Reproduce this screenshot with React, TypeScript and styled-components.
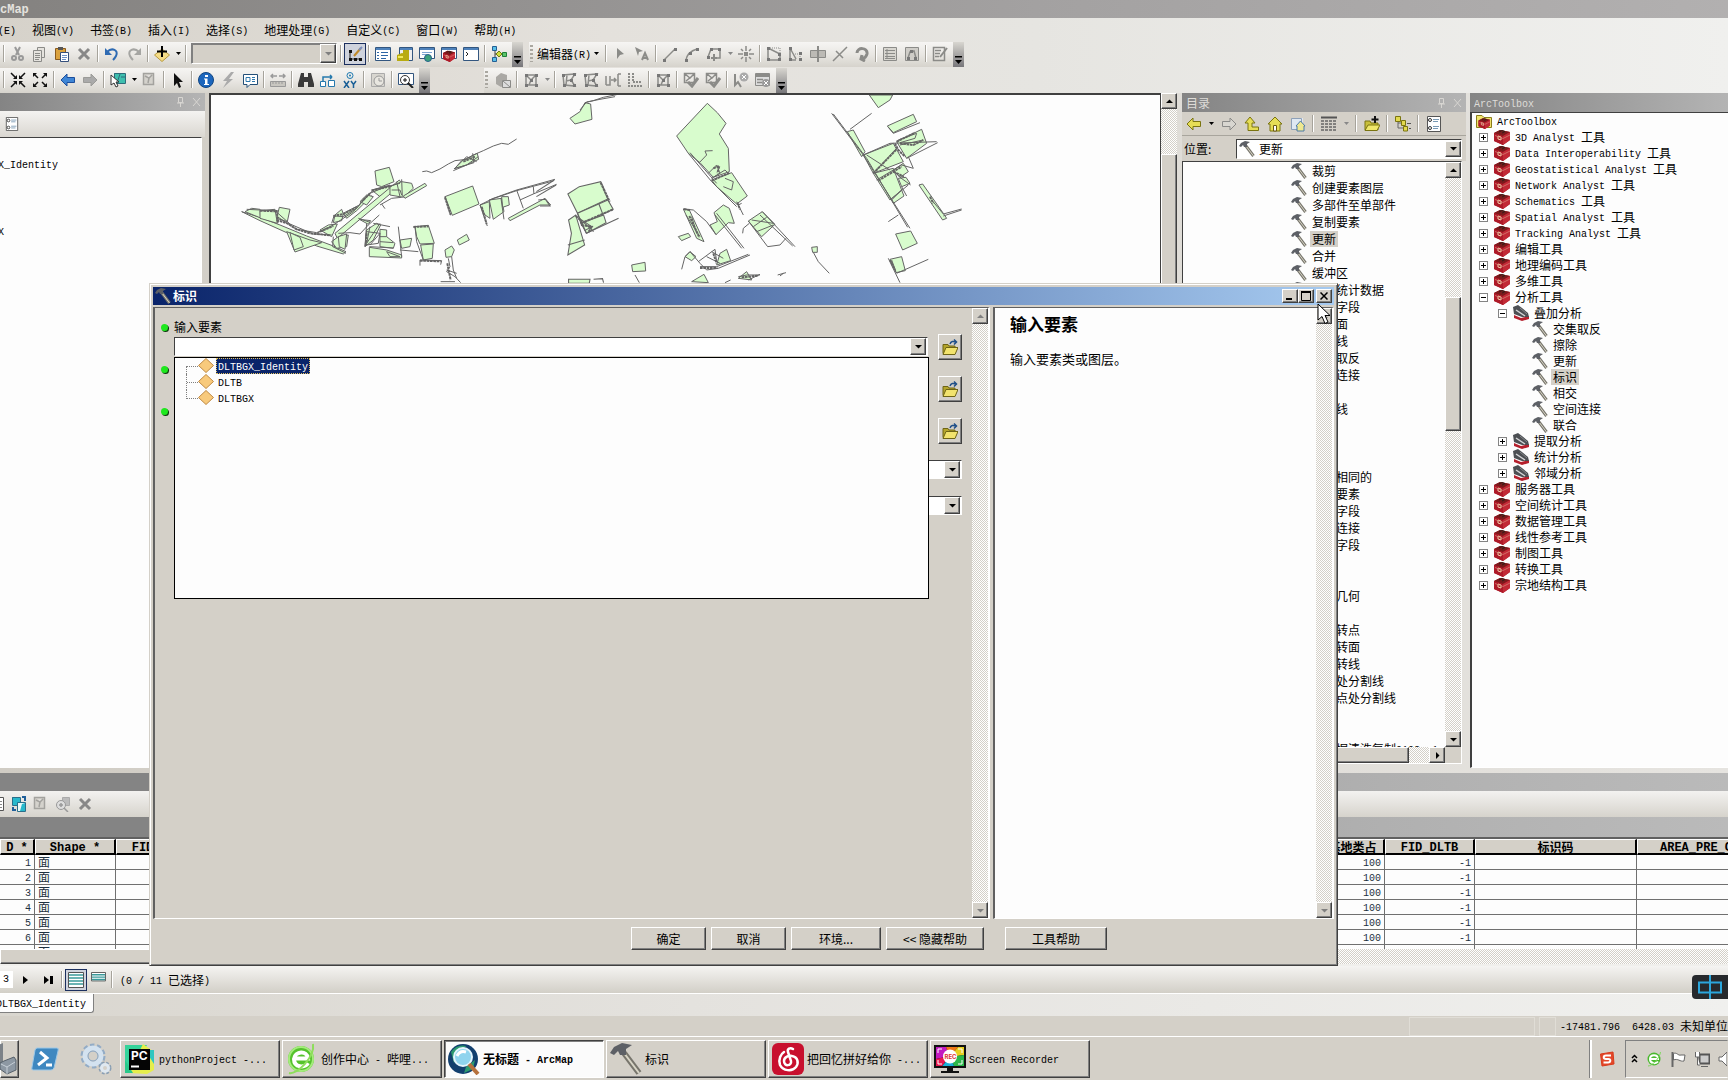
import React from "react";
import styled, { createGlobalStyle, css } from "styled-components";

const CJK = `"Noto Sans CJK SC", sans-serif`;
const MONO = `"Liberation Mono", "Noto Sans CJK SC", monospace`;
const FACE = "#d4d0c8";
const DITHER = `repeating-conic-gradient(#ffffff 0 25%, #d4d0c8 0 50%) 0 0 / 2px 2px`;

const Global = createGlobalStyle`
  * { box-sizing: border-box; }
  html, body { margin: 0; height: 100%; }
  body { background: ${FACE}; color: #000; font: 12px/16px ${CJK}; overflow: hidden; }
  button, input, select { font: inherit; color: inherit; margin: 0; padding: 0; border: 0; background: none; border-radius: 0; outline: 0; }
  svg { display: block; flex: none; }
  ul, h1, h2, p { margin: 0; padding: 0; list-style: none; font: inherit; }
`;

const raised = css`
  background: ${FACE};
  border: 1px solid;
  border-color: #fff #404040 #404040 #fff;
  box-shadow: inset -1px -1px 0 #808080;
`;
const sunken = css`
  border: 1px solid;
  border-color: #404040 #fff #fff #404040;
`;

/* ---------- text: half-width latin beside full-width han ---------- */
const Latin = styled.span<{ $big?: boolean }>`
  font-family: ${MONO};
  font-size: ${(p) => (p.$big ? 12 : 10)}px;
  line-height: 10px;
  vertical-align: 1px;
`;
const Run = styled.span`
  white-space: pre;
`;
function T({ children, big }: { children: string; big?: boolean }) {
  return (
    <Run>
      {children
        .split(/([\x20-\x7e]+)/)
        .filter(Boolean)
        .map((s, i) => (/^[\x20-\x7e]/.test(s) ? <Latin key={i} $big={big}>{s}</Latin> : s))}
    </Run>
  );
}

/* ---------- icons ---------- */
const G = "#8b8b88";
const L = (d: string, c = G, w = c === G ? 1.5 : 1, fill = "none") => <path d={d} stroke={c} strokeWidth={w} fill={fill} />;
const F = (d: string, c = G) => <path d={d} fill={c} />;
const toolbox = (
  <>
    {F("M0 4 6 1 16 3 16 11 9 16 0 12Z", "#a51322")}
    {F("M0 4 6 1 16 3 9 7Z", "#7c1a1c")}
    {F("M9 7 16 3 16 11 9 16Z", "#c22a36")}
    {F("M0 4 9 7 9 16 0 12Z", "#ae1a28")}
    {L("M5 3 8 1.500 11 2.500 8 4", "#302018", 1)}
    {L("M4 7 4 10 7 11 7 8Z", "#f0cfa8", 1)}
    {L("M1 6.500 9 9.500 16 6", "#d98a7c", 0.7)}
  </>
);
const nodes = (pts: number[][], c = "#777") => pts.map(([x, y], i) => <rect key={i} x={x - 1} y={y - 1} width="3" height="3" fill={c} />);

const ICONS: Record<string, React.ReactNode> = {
  cut: <>{L("M5 1 9 9M10 1 6 9", "#999", 2)}<circle cx="4" cy="12" r="2" stroke="#999" fill="none" strokeWidth="2" /><circle cx="11" cy="12" r="2" stroke="#999" fill="none" strokeWidth="2" /></>,
  copy: <>{L("M5.500 1.500H12.500V11.500H5.500Z", G, 1, "#e5e3de")}{L("M1.500 4.500H9.500V15.500H1.500Z", G, 1, "#e5e3de")}{L("M3 7.500H8M3 9.500H8M3 11.500H8M3 13.500H7", G, 1)}</>,
  paste: <>{L("M1.500 2.500H11.500V13.500H1.500Z", "#8a5a1e", 1, "#dba23e")}{F("M4 1H9V4H4Z", "#555")}{L("M6.500 6.500H14.500V15.500H6.500Z", "#35507c", 1, "#fff")}{L("M8 9.500H13M8 11.500H13M8 13.500H12", "#6b8fc4")}</>,
  x: L("M3 3 13 13M13 3 3 13", "#888", 3),
  undo: <>{L("M3 6C8 1 15 4 12 10 11 12 10 13 9 14", "#2f6bb3", 2)}{F("M1 2V9H8Z", "#2f6bb3")}</>,
  redo: <>{L("M13 6C8 1 1 4 4 10 5 12 6 13 7 14", "#a5a5a2", 2)}{F("M15 2V9H8Z", "#a5a5a2")}</>,
  add: <>{L("M0.500 9 8 3 15.500 9 8 15.500Z", "#b89a3c", 1, "#f5dc86")}{L("M8 0V11M3 5.500H13", "#000", 2)}</>,
  editor: <>{L("M3 5V13H13", "#222", 1)}{nodes([[3, 5], [3, 13], [8, 13], [13, 13]], "#111")}{L("M7 10 14 2", "#c08a2a", 2)}{L("M12 4 15 1", "#7a8fc0", 2)}</>,
  toc: <>{L("M0.500 1.500H15.500V14.500H0.500Z", "#33567f", 1, "#fff")}{F("M1 2H15V4H1Z", "#4f82bb")}{L("M2 6.500H4M6 6.500H13M2 9.500H4M6 9.500H13M2 12.500H4M6 12.500H11", "#2e66a6", 1)}</>,
  catalog: <>{L("M2.500 1.500H15.500V14.500H2.500Z", "#33567f", 1, "#eee")}{F("M3 2H15V4H3Z", "#4f82bb")}{F("M0 9 5 7 12 9V15H0ZM6 4H12V9H6Z", "#b8ab10")}{F("M1 10H6V12H1Z", "#f2e95a")}</>,
  search: <>{L("M0.500 1.500H15.500V12.500H0.500Z", "#33567f", 1, "#fff")}{F("M1 2H15V4H1Z", "#4f82bb")}{L("M3 6.500H13M3 8.500H8", "#7fa6d4")}<circle cx="9" cy="12" r="3.500" fill="#3da27c" stroke="#27618c" /></>,
  toolwin: <>{L("M0.500 1.500H15.500V12.500H0.500Z", "#33567f", 1, "#fff")}{F("M1 2H15V4H1Z", "#4f82bb")}<g transform="translate(2 4) scale(.75)">{toolbox}</g></>,
  python: <>{L("M0.500 1.500H15.500V14.500H0.500Z", "#33567f", 1, "#fff")}{F("M1 2H15V4H1Z", "#4f82bb")}{L("M3 6 5 8 3 10", "#222")}</>,
  model: <>{L("M4 3V13M4 8H10", "#444", 1)}{L("M1.500 0.500H5.500V4.500H1.500ZM1.500 11.500H5.500V15.500H1.500Z", "#245f95", 1, "#5ac0e8")}{L("M5 8 8 5 11 8 8 11Z", "#6d7d16", 1, "#cfdd3e")}{L("M11.500 6.500H15.500V10.500H11.500Z", "#1f7f38", 1, "#5cc46c")}</>,
  inward: <>{L("M1 1 6 6M15 1 10 6M1 15 6 10M15 15 10 10", "#111", 1.500)}{F("M7 3V7H3ZM9 3V7H13ZM7 13V9H3ZM9 13V9H13Z", "#111")}</>,
  outward: <>{L("M2 2 6 6M14 2 10 6M2 14 6 10M14 14 10 10", "#111", 1.500)}{F("M1 1H5L1 5ZM15 1H11L15 5ZM1 15H5L1 11ZM15 15H11L15 11Z", "#111")}</>,
  back: L("M1 8 7 2V5.500H14.500V10.500H7V14Z", "#1c4e9c", 1, "#3f86d6"),
  fwd: L("M15 8 9 2V5.500H1.500V10.500H9V14Z", "#9b9b98", 1, "#aaa"),
  select: <>{F("M4 1H15V11H4Z", "#3ebfae")}{L("M4.500 1.500H15.500V11.500H4.500ZM10 2 7 11M11 5H15", "#2d6c7a")}{L("M1 3 1 13 4 11 6 15 8 14 6 10 9 10Z", "#333", 1, "#fff")}</>,
  clear: L("M1.500 1.500H11.500V12.500H1.500ZM3 4 7 6 10 3M7 6 6 11", "#a3a29e", 1.500, "#d4d2cc"),
  pointer: F("M4 1V14L7 11 9 16 11 15 9 10 13 10Z", "#111"),
  info: <><circle cx="8" cy="8" r="7.500" fill="#1c66bd" stroke="#114682" />{F("M7 3H10V5H7ZM6 6.500H9.500V12H11V13H6V12H7V7.500H6Z", "#fff")}</>,
  bolt: F("M11 0 3 9H7L3 16 13 7H9L14 0Z", "#aaa"),
  popup: <>{L("M1.500 2.500H15.500V12.500H8L5 15.500V12.500H1.500Z", "#234f78", 1, "#fff")}{L("M4 5.500H8V9.500H4ZM10 5.500H13M10 7.500H13M10 9.500H13", "#2f78ad")}</>,
  measure: <>{L("M0.500 9.500H15.500V14.500H0.500ZM3 9V12M6 9V12M9 9V12M12 9V12", "#999", 1, "#c8c6c0")}{L("M1 4H7M9 4H15M3 2 1 4 3 6M13 2 15 4 13 6", "#999", 1.500)}</>,
  find: F("M3 1H6V5H10V1H13L16 12V15H10V10H6V15H0V12Z", "#3a3a3a"),
  route: <>{L("M3 13V5H12M12 5 10 3M12 5 10 7", "#2679ad", 1.500)}{L("M0.500 9.500H5.500V14.500H0.500ZM8.500 8.500H14.500V14.500H8.500Z", "#2679ad", 1, "#fff")}</>,
  xy: <><circle cx="8" cy="3.500" r="3" fill="none" stroke="#1e79b0" /><circle cx="8" cy="3.500" r="1" fill="#1e79b0" />{L("M2 9 7 16M7 9 2 16M9 9 11.500 12.500 14 9M11.500 12V16", "#1a5f96", 1.500)}</>,
  clock: <>{L("M1.500 1.500H14.500V14.500H1.500Z", "#aaa", 1, "#d8d6d0")}<circle cx="9" cy="9" r="5" fill="#e8e6e0" stroke="#999" />{L("M9 6V9H12", "#999")}</>,
  magnify: <>{L("M0.500 1.500H15.500V12.500H0.500Z", "#33567f", 1, "#fff")}<circle cx="7" cy="8" r="4.500" fill="#fff" stroke="#333" />{L("M5 8H9M7 6V10", "#111")}{L("M10 11 15 16", "#222", 2)}</>,
  arrowA: <>{F("M1 1 9 5 5 6 4 10Z")}{L("M8 14 11 7 14 14M9 12H13", G, 2)}</>,
  arrowS: F("M5 2 12 8 8 9 5 13Z"),
  line: <>{L("M2 14 13 3")}{nodes([[2, 14], [13, 3]])}</>,
  arc: <>{L("M2 14C3 8 6 5 13 3")}{nodes([[2, 14], [6, 7], [13, 3]])}</>,
  trace: <>{L("M2 11 5 3H14V12H9")}{nodes([[5, 3], [13, 3], [2, 11]])}{L("M8 8V15M5 12H11", G, 2)}</>,
  star: <>{L("M8 0V5M8 11V16M0 8H5M11 8H16M3 3 5 5M13 3 11 5M3 13 5 11M13 13 11 11", G, 1.500)}{F("M6 6H10V10H6Z")}</>,
  reshape: <>{L("M2 2V14H14V8L2 2")}<path d="M2 2H14V8" stroke={G} strokeDasharray="1 1" fill="none" />{nodes([[2, 2], [2, 13], [13, 13], [13, 8]])}</>,
  splitp: <>{L("M2 2V14H8M2 2 8 13")}<path d="M12 6V15M7 8H14" stroke={G} strokeDasharray="1 1" fill="none" />{nodes([[2, 2], [2, 13], [12, 7], [12, 13]])}</>,
  cutp: <>{L("M0.500 4.500H15.500V11.500H0.500Z", G, 1, "#bcbab5")}{L("M8 0V16", G, 2)}</>,
  split: L("M1 15 15 1M4 5 11 12"),
  rotate: L("M3 7C3 1 14 1 13 8 12 12 8 13 8 13M8 9 7 13 11 15", G, 3),
  attrs: <>{L("M1.500 1.500H14.500V14.500H1.500Z", G, 1, "#d8d6d0")}{L("M3 4.500H13M3 7.500H13M3 10.500H13M3 12.500H13M5 3V13", G, 1)}</>,
  sketch: <>{L("M1.500 1.500H14.500V14.500H1.500Z", G, 1, "#cfcdc8")}{L("M4 12 6 6 10 5 12 12")}{nodes([[4, 12], [7, 5], [11, 12]])}</>,
  form: <>{L("M1.500 1.500H12.500V14.500H1.500ZM3 4.500H9M3 7.500H8M3 10.500H7", G, 1.500)}{L("M8 11 15 2", G, 2)}</>,
  cube: <>{F("M1 5 6 1 12 3 12 12 6 15 1 12Z", "#aaa8a4")}{L("M7.500 8.500H15.500V15.500H7.500ZM8 9 15 15", G, 1, "#ddd")}</>,
  topo: <>{L("M3 3H13V13H3ZM3 3 8 8 13 3M8 8 6 13")}{nodes([[3, 3], [13, 3], [3, 13], [8, 8], [13, 13]])}</>,
  topo2: <>{L("M2 3 14 2 10 8 14 14 3 13ZM6 3 5 13M10 8 5 9")}{nodes([[2, 3], [13, 2], [10, 8], [3, 13], [13, 13]])}</>,
  align: L("M1 4V13M1 13H5V4M13 2V14M13 2H16M13 14H16M6 8H11M9 6 11 8 9 10"),
  corner: <path d="M2 1V14H15M6 1V10H14" stroke={G} strokeWidth="2" strokeDasharray="2 1" fill="none" />,
  check: <>{L("M1.500 1.500H11.500V10.500H1.500ZM2 2 7 6 11 2M3 9 8 5")}{L("M5 10 9 14 15 6", G, 3)}</>,
  inspect: <>{L("M2 2V13L5 10 8 15", G, 2)}<circle cx="11" cy="5" r="4.500" fill="#aaa" />{L("M9 3 13 7M13 3 9 7", "#fff")}</>,
  errs: <>{L("M0.500 1.500H14.500V13.500H0.500Z", G, 1, "#ddd")}{F("M1 2H14V5H1Z")}{L("M2 7.500H8M2 10.500H7")}<circle cx="11" cy="11" r="4" fill="#999" />{L("M9 9 13 13M13 9 9 13", "#fff")}</>,
  list: <>{L("M1.500 0.500H14.500V15.500H1.500Z", "#555", 1, "#fff")}{L("M7 3.500H13M7 5.500H12M7 10.500H13M7 12.500H12", "#7a9ab5")}<circle cx="4" cy="4" r="1.500" fill="none" stroke="#333" /><circle cx="4" cy="12" r="1.500" fill="none" stroke="#333" /></>,
  yback: L("M1 8 7 2V5.500H14.500V10.500H7V14Z", "#7a7410", 1, "#e6dd55"),
  gfwd: L("M15 8 9 2V5.500H1.500V10.500H9V14Z", "#8a8a88", 1, "#d8d6d0"),
  up: L("M6 1 1 7H4V14.500H14.500V11H8V7H11Z", "#7a7410", 1, "#e6dd55"),
  home: <>{L("M1 8 8 1 15 8H13V15H3V8Z", "#7a7410", 1, "#e6dd55")}{L("M6.500 9.500H9.500V15H6.500Z", "#6b5a10", 1, "#fff")}</>,
  homedb: <>{F("M2 2H13V13H2Z", "#dfe8f2")}{L("M1.500 2.500H11.500V13.500H1.500Z", "#8da0b8")}{L("M6 10 10.500 5 15 10H14V15H7V10Z", "#4b7aa8", 1, "#efe890")}</>,
  grid: <>{L("M0 1.500H16", "#555", 2)}<path d="M0 5H16M0 8H16M0 11H16M0 14H16" stroke="#666" strokeWidth="1.500" strokeDasharray="3 1" /></>,
  folderplus: <>{L("M1 14V5H6L7 7H14V14Z", "#7a7410", 1, "#c8bf3a")}{L("M1 14.500 4 9H16L13 14.500Z", "#7a7410", 1, "#efe76a")}{L("M11 0V7M7.500 3.500H14.500", "#111", 2)}</>,
  tree: <>{L("M3 3V12H10M3 7H9", "#666")}{L("M0.500 0.500H5.500V5.500H0.500ZM6.500 4.500H10.500V9.500H6.500ZM8.500 10.500H12.500V15H8.500Z", "#7a7410", 1, "#e2d94e")}{L("M12 7.500H16M14 12.500H16", "#555")}</>,
  hammer: <>{L("M7 5 14.500 15", "#77756c", 3)}{L("M7 5 14.500 15", "#d8d5c6", 1)}{F("M0 5 2 2 6 0 11 1 8 3 8 6 5 6 4 4 2 6Z", "#5d6066")}</>,
  toolbox,
  boxroot: <>{L("M0.500 2.500H6L8 4.500H15.500V14.500H0.500Z", "#8a7d1a", 1, "#f0e46c")}<g transform="translate(2.500 4.500) scale(.72)">{toolbox}</g></>,
  toolset: <>{F("M1 10 8 13 16 11V14L9 16 1 13Z", "#b5202d")}{F("M0 2 5 0 9 3 15 8 16 12 9 12 1 9Z", "#4c4f53")}{L("M3 5 12 11", "#d4d5d7", 1.500)}{L("M7 3 14 9", "#85878a", 1)}</>,
  diamond: L("M8 0.500 15.500 7.500 8 14.500 0.500 7.500Z", "#c08a45", 1, "#f8ca7c"),
  folder: <>{L("M1 14.500V5.500H6L7 7H13V9", "#6e6415", 1, "#b4a52b")}{L("M1 15.500 4 8.500H16L13 15.500Z", "#6e6415", 1, "#f2e36d")}{L("M8 5C9 2 11 2 14 3M12 0.500 14.500 3 12 5.500", "#1f4f88", 1.500)}</>,
  switchsel: <>{F("M1 1H9V9H1Z", "#28b8cc")}{L("M1.500 1.500H9.500V9.500H1.500ZM6.500 6.500H14.500V15.500H6.500Z", "#2a6f8a", 1, "none")}{F("M7 7H14V15H7Z", "#eafafa")}{F("M11 8 14 7V15L9 15Z", "#28b8cc")}{L("M11 1H14V5M2 11V14H5", "#1f5f9a", 2)}</>,
  zoomsel: <>{L("M7.500 1.500H14.500V9.500H7.500Z", "#aaa", 1, "#bbb")}<circle cx="6" cy="9" r="4.500" fill="#ddd" stroke="#999" />{L("M4 9H8M6 7V11M9 12 13 16", "#999", 1.500)}</>,
  tableic: <>{L("M0.500 1.500H14.500V14.500H0.500Z", "#555", 1, "#fff")}{L("M2 5.500H13M2 8.500H13M2 11.500H13M5 3V13", "#888")}</>,
  allrec: <>{L("M0.500 0.500H15.500V15.500H0.500Z", "#555", 1, "#fff")}{L("M1 3H15M1 6H15M1 9H15M1 12H15", "#3a9a9a", 1.500)}</>,
  selrec: <>{L("M0.500 0.500H15.500V9.500H0.500Z", "#555", 1, "#fff")}{L("M1 3H15M1 5.500H15M1 8H15", "#3a9a9a", 1.500)}</>,
  sogou: <>{L("M1.500 3 14 1 15 13 3 15Z", "#d93a1c", 1, "#e3482a")}{L("M12 4.500H7C4 4.500 4 8 7 8H9.500C12 8 12 11.500 9 11.500H4.500", "#fff", 2)}</>,
  egreen: <><circle cx="8" cy="8" r="6.500" fill="#4ab82e" />{L("M4 8H12C12 3 4 3 4 8 4 13 10 13 12 10.500", "#fff", 2)}{L("M2 15C6 15 14 7 14.500 1", "#7ed860")}</>,
  flag: <>{L("M2.500 1V16", "#666", 2)}{L("M3.500 2.500C7 1 8 5 11 4L15 4 14 10C10 11 8 7 3.500 9Z", "#666", 1, "#fff")}</>,
  net: <>{L("M5.500 3.500H15.500V12.500H5.500Z", "#555", 2, "#ccc")}{L("M7 15.500H14M1.500 1V6H5.500V1M3.500 6V14H6", "#666", 1, "#fff")}</>,
  sound: L("M1 6H4L9 1V15L4 10H1Z", "#666", 1, "#fff"),
};
function Icon({ n, s = 16 }: { n: string; s?: number }) {
  return (
    <svg width={s} height={s} viewBox="0 0 16 16" aria-hidden="true">
      {ICONS[n]}
    </svg>
  );
}
const Tri = ({ c = "#000", dir = "down" }: { c?: string; dir?: "up" | "down" | "right" }) => (
  <svg width="7" height="7" viewBox="0 0 7 7" aria-hidden="true">
    <path d={dir === "up" ? "M0 5H7L3.500 1.500Z" : dir === "down" ? "M0 2H7L3.500 5.500Z" : "M2 0V7L5.500 3.500Z"} fill={c} />
  </svg>
);

/* ---------- frame ---------- */
const Screen = styled.div`
  position: relative;
  display: flex;
  flex-direction: column;
  height: 100vh;
  overflow: hidden;
  background: ${FACE};
`;
const AppTitle = styled.h1`
  flex: none;
  height: 18px;
  overflow: hidden;
  background: linear-gradient(90deg, #848280, #a3a1a1 60%, #b2b0b0);
  color: #e4e2de;
  font: bold 12px/20px ${MONO};
`;
const Chrome = styled.div`
  flex: none;
  background: linear-gradient(90deg, #d6d2ca, #e4e1dc 35%, #e6e5e1 60%, #f0f0ee);
`;
const Menu = styled.nav`
  display: flex;
  gap: 16px;
  height: 24px;
  margin-left: -2px;
  align-items: center;
`;
const MenuItem = styled.button`
  height: 20px;
  white-space: nowrap;
`;
const Bars = styled.div<{ $gap: number }>`
  display: flex;
  gap: ${(p) => p.$gap}px;
  height: 25px;
  & + & { margin-top: 1px; }
`;
const Bar = styled.div<{ $lead?: boolean }>`
  display: flex;
  align-items: center;
  height: 25px;
  padding: 0 0 2px ${(p) => (p.$lead ? 1 : 0)}px;
  background: linear-gradient(#f6f5f3, #e9e7e3 50%, #d6d3cc);
`;
const Tool = styled.button<{ $on?: boolean; $w?: number }>`
  display: flex;
  align-items: center;
  justify-content: center;
  width: ${(p) => p.$w ?? 22}px;
  height: 22px;
  flex: none;
  ${(p) => p.$on && css`border: 1px solid #1b2f5e; background: #cfd3dd;`}
`;
const Sep = styled.span`
  width: 2px;
  height: 17px;
  margin: 0 2px;
  flex: none;
  border-left: 1px solid #a6a39b;
  border-right: 1px solid #fff;
`;
const Caret = styled.button`
  width: 10px;
  height: 22px;
  display: flex;
  align-items: center;
  justify-content: center;
  flex: none;
`;
const Overflow = styled.button`
  display: flex;
  align-items: flex-end;
  justify-content: center;
  width: 11px;
  height: 25px;
  margin: 0 0 -2px 2px;
  padding-bottom: 3px;
  background: linear-gradient(#d8d6d0, #77767a);
`;
const Grip = styled.span`
  width: 3px;
  height: 17px;
  margin: 0 4px 0 1px;
  background: repeating-linear-gradient(#aaa7a0 0 2px, transparent 2px 4px);
`;
const BarSelect = styled.div`
  display: flex;
  width: 146px;
  height: 21px;
  margin: 0 1px 0 2px;
  border: 1px solid;
  border-color: #808080 #fff #fff #808080;
  box-shadow: inset 1px 1px 0 #808080;
  background: ${FACE};
  select { flex: 1; appearance: none; }
`;
const Arrow = styled.span<{ $w?: number }>`
  ${raised}
  display: flex;
  align-items: center;
  justify-content: center;
  width: ${(p) => p.$w ?? 16}px;
  min-height: 16px;
  flex: none;
`;
const EditorBtn = styled.button`
  display: flex;
  align-items: center;
  gap: 3px;
  height: 22px;
  padding: 0 4px 0 0;
  white-space: nowrap;
`;

function Tools({ spec }: { spec: string }) {
  return (
    <>
      {spec.split(" ").map((s, i) => {
        if (s === "|") return <Sep key={i} />;
        if (s === "v" || s === "V")
          return <Caret key={i} aria-label="more"><svg width="5" height="3" aria-hidden="true"><path d="M0 0H5L2.500 3Z" fill={s === "V" ? "#000" : "#888"} /></svg></Caret>;
        if (s === ">")
          return <Overflow key={i} aria-label="options"><svg width="7" height="8" aria-hidden="true"><path d="M0 0H7V1.500H0ZM0 4H7L3.500 8Z" fill="#000" /></svg></Overflow>;
        return <Tool key={i} $on={s === "editor"} aria-label={s}><Icon n={s} /></Tool>;
      })}
    </>
  );
}

/* ---------- workspace ---------- */
const Work = styled.main`
  flex: 1;
  min-height: 0;
  display: flex;
  padding-bottom: 5px;
  background: linear-gradient(90deg, #d0ccc4, #dcd9d3 50%, #e6e4e0);
`;
const Panel = styled.section<{ $w: number; $gap?: number }>`
  display: flex;
  flex-direction: column;
  width: ${(p) => p.$w}px;
  flex: none;
  margin-left: ${(p) => p.$gap ?? 0}px;
  min-height: 0;
`;
const PanelHead = styled.header<{ $h?: number }>`
  display: flex;
  align-items: center;
  gap: 7px;
  height: ${(p) => p.$h ?? 19}px;
  flex: none;
  padding: 0 4px;
  background: linear-gradient(90deg, #848484, #b4b4b4);
  color: #dedcd8;
  h2 { flex: 1; }
`;
const PanelBtn = styled.button`
  width: 9px;
  height: 12px;
`;
const PanelBar = styled.div`
  display: flex;
  align-items: center;
  height: 26px;
  flex: none;
  padding-left: 1px;
  background: linear-gradient(#f4f3f1, #dad7d1);
`;
const Contents = styled.div`
  flex: 1;
  background: #fdfdfd;
  margin-right: 3px;
  border-top: 1px solid #404040;
  border-right: 1px solid #fff;
  padding-top: 18px;
  overflow: hidden;
`;
const Layer = styled.div`
  height: 16px;
  margin: 0 0 51px -2px;
`;
const MapView = styled.div`
  flex: 1;
  min-width: 0;
  margin-left: 4px;
  border: 1px solid #404040;
  border-width: 2px 1px 1px 2px;
  background: #fdfdfd;
  overflow: hidden;
`;
const VScroll = styled.div`
  display: flex;
  flex-direction: column;
  width: 16px;
  flex: none;
  background: ${DITHER};
`;
const Thumb = styled.div<{ $w?: number; $h?: number }>`
  ${raised}
  width: ${(p) => (p.$w ? p.$w + "px" : "auto")};
  height: ${(p) => (p.$h ? p.$h + "px" : "auto")};
`;
const ScrollBtn = styled.button`
  ${raised}
  width: 16px;
  height: 16px;
  flex: none;
  display: flex;
  align-items: center;
  justify-content: center;
`;
const Space = styled.div<{ $n?: number }>`
  flex: ${(p) => (p.$n ? `0 0 ${p.$n}px` : 1)};
`;

const CatBar = styled.div`
  display: flex;
  align-items: center;
  height: 24px;
  flex: none;
  background: ${FACE};
  border-bottom: 1px solid #a8a59d;
  ${Tool} { width: 23px; }
  ${Caret} { width: 12px; }
  ${Sep} { margin: 0 3px; }
`;
const Location = styled.div`
  display: flex;
  align-items: center;
  height: 25px;
  flex: none;
  padding: 0 4px 0 2px;
  background: ${FACE};
  label { width: 52px; }
`;
const LocBox = styled.div`
  ${sunken}
  display: flex;
  align-items: center;
  flex: 1;
  height: 20px;
  padding-left: 2px;
  background: #fff;
  input { flex: 1; min-width: 0; padding-left: 4px; height: 16px; }
`;
const CatBody = styled.div`
  flex: 1;
  min-height: 0;
  display: grid;
  grid-template: minmax(0, 1fr) 16px / minmax(0, 1fr) 16px;
  margin: 0 4px 4px 0;
  border: 1px solid;
  border-color: #404040 #fff #fff #404040;
  background: ${FACE};
`;
const CatList = styled.ul`
  background: #fdfdfd;
  overflow: hidden;
  padding-left: 108px;
`;
const CatRow = styled.li`
  height: 17px;
  display: flex;
  align-items: center;
  gap: 3px;
`;
const Label = styled.button<{ $sel?: boolean }>`
  height: 16px;
  line-height: 16px;
  padding: 0 2px;
  white-space: nowrap;
  background: ${(p) => (p.$sel ? "#d4d0c8" : "none")};
`;
const HScroll = styled.div`
  display: flex;
  background: ${DITHER};
`;

const Tree = styled.ul`
  flex: 1;
  background: #fdfdfd;
  border-left: 2px solid #404040;
  border-top: 1px solid #404040;
  border-bottom: 1px solid #fff;
  overflow: hidden;
`;
const TreeRow = styled.li<{ $lv: number }>`
  display: flex;
  align-items: center;
  height: 16px;
  gap: 3px;
  padding-left: ${(p) => (p.$lv ? 7 + 19 * (p.$lv - 1) : 4)}px;
`;
const Expander = styled.button<{ $off?: boolean }>`
  width: 9px;
  height: 9px;
  margin-right: 3px;
  flex: none;
  visibility: ${(p) => (p.$off ? "hidden" : "visible")};
  border: 1px solid #848484;
  background: #fff;
  svg { margin: 1px; }
`;

/* ---------- attribute table ---------- */
const Dock = styled.section`
  flex: none;
`;
const Band = styled.div<{ $h: number; $line?: boolean }>`
  height: ${(p) => p.$h}px;
  background: linear-gradient(90deg, #848484 10%, #b0b0b0 80%, #bababa);
  border-bottom: ${(p) => (p.$line ? "2px solid #606060" : "0")};
`;
const DockBar = styled.div`
  display: flex;
  align-items: center;
  height: 26px;
  background: linear-gradient(#f3f2f0, #d6d3cc);
  overflow: hidden;
  button:first-child { margin-left: -14px; }
`;
const GridBox = styled.div`
  height: 110px;
  overflow: hidden;
  background: #fdfdfd;
`;
const Table = styled.table`
  width: calc(100% + 28px);
  table-layout: fixed;
  border-collapse: separate;
  border-spacing: 0;
  th {
    height: 16px;
    padding: 0;
    font-weight: bold;
    line-height: 13px;
    vertical-align: middle;
    background: ${FACE};
    border: 1px solid;
    border-color: #fff #000 #000 #fff;
    border-width: 1px 2px 2px 1px;
    white-space: nowrap;
    overflow: hidden;
  }
  td {
    height: 15px;
    padding: 0 3px;
    line-height: 14px;
    vertical-align: middle;
    border-right: 1px solid #707070;
    border-bottom: 1px solid #707070;
    text-align: right;
    color: #1c3040;
    white-space: nowrap;
    overflow: hidden;
  }
  td:nth-child(2) { text-align: left; }
`;
const DockScroll = styled.div`
  display: flex;
  height: 17px;
  border-bottom: 2px solid #f0efec;
  background: ${DITHER};
`;
const Nav = styled.div`
  display: flex;
  align-items: center;
  height: 28px;
  background: linear-gradient(#f5f4f2, #d2cfc7);
  border-bottom: 1px solid #fff;
  input { width: 13px; height: 17px; background: #fff; padding-left: 3px; font: 10px/16px ${MONO}; }
`;
const Count = styled.span`
  margin-left: 5px;
`;
const Tabs = styled.div`
  height: 22px;
  background: linear-gradient(90deg, #d9d6cf, #e4e2de 40%, #f0f0ee);
`;
const Tab = styled.button`
  height: 19px;
  margin-left: -6px;
  padding: 0 7px 0 1px;
  background: #fdfdfd;
  border: 1px solid #808080;
  border-top: 0;
  border-radius: 0 0 3px 0;
`;
const Status = styled.footer`
  display: flex;
  justify-content: flex-end;
  align-items: center;
  gap: 4px;
  height: 21px;
  background: ${FACE};
  border-bottom: 1px solid #fff;
  overflow: hidden;
`;
const StatusCell = styled.span<{ $w: number }>`
  width: ${(p) => p.$w}px;
  height: 19px;
  flex: none;
  border: 1px solid #e0ddd6;
`;
const Coords = styled.span`
  width: 168px;
  overflow: hidden;
  white-space: nowrap;
`;

/* ---------- task bar ---------- */
const TaskBar = styled.div`
  display: flex;
  align-items: center;
  height: 43px;
  flex: none;
  background: ${FACE};
`;
const Quick = styled.button<{ $w: number }>`
  width: ${(p) => p.$w}px;
  height: 38px;
  display: flex;
  align-items: center;
  justify-content: center;
`;
const FirstTask = styled(Quick)`
  ${raised}
  justify-content: flex-end;
`;
const Tasks = styled.div`
  display: flex;
  flex: 1;
  gap: 2px;
`;
const Task = styled.button<{ $on?: boolean }>`
  ${raised}
  display: flex;
  align-items: center;
  gap: 3px;
  width: 160px;
  height: 38px;
  padding-left: 3px;
  text-align: left;
  ${(p) => p.$on && css`background: #fbfbfb; border-color: #404040 #fff #fff #404040; box-shadow: inset 1px 1px 0 #808080; font-weight: bold;`}
`;
const Tray = styled.div`
  display: flex;
  align-items: center;
  height: 38px;
  width: 138px;
  border-left: 2px solid #fff;
  box-shadow: -1px 0 0 #808080;
`;
const TrayBox = styled.div`
  display: flex;
  align-items: center;
  gap: 8px;
  flex: 1;
  height: 38px;
  margin-left: 3px;
  padding-left: 5px;
  border: 1px solid;
  border-color: #808080 transparent #fff #808080;
  overflow: hidden;
`;
const TrayBtn = styled.button`
  flex: none;
`;
const Ime = styled.button`
  position: absolute;
  right: 0;
  bottom: 81px;
  width: 36px;
  height: 24px;
  display: flex;
  align-items: center;
  justify-content: center;
  border-radius: 4px 0 0 4px;
  background: #26292c;
`;

/* ---------- dialog ---------- */
const Dialog = styled.section`
  position: absolute;
  left: 149px;
  top: 283px;
  width: 1189px;
  display: flex;
  flex-direction: column;
  padding: 2px;
  background: ${FACE};
  border: 1px solid;
  border-color: #d4d0c8 #404040 #404040 #d4d0c8;
  box-shadow: inset 1px 1px 0 #fff, inset -1px -1px 0 #808080;
`;
const DlgTitle = styled.header`
  display: flex;
  align-items: center;
  height: 18px;
  margin: 1px 1px 2px;
  padding: 0 2px;
  background: linear-gradient(90deg, #0a246a, #a6caf0);
  color: #fff;
  font-weight: bold;
  h2 { flex: 1; padding-left: 2px; }
`;
const WinBtn = styled.button<{ $gap?: boolean }>`
  ${raised}
  width: 16px;
  height: 14px;
  margin-left: ${(p) => (p.$gap ? 2 : 0)}px;
  display: flex;
  align-items: center;
  justify-content: center;
`;
const DlgBody = styled.div`
  display: flex;
  gap: 3px;
  height: 612px;
  margin: 0 1px;
`;
const Pane = styled.div<{ $w?: number; $bg?: string }>`
  display: flex;
  flex: ${(p) => (p.$w ? `0 0 ${p.$w}px` : 1)};
  min-width: 0;
  background: ${(p) => p.$bg ?? FACE};
  border: 1px solid;
  border-color: #606060 #fff #fff #606060;
  border-width: 1px 2px 1px 2px;
`;
const Form = styled.form`
  flex: 1;
  min-width: 0;
  padding: 11px 10px 0 6px;
`;
const Param = styled.div<{ $plain?: boolean }>`
  display: grid;
  grid-template-columns: 13px minmax(0, 1fr) ${(p) => (p.$plain ? "" : "24px")};
  grid-template-rows: 15px ${(p) => (p.$plain ? 19 : 26)}px;
  margin-bottom: ${(p) => (p.$plain ? 2 : 1)}px;
  label { grid-column: 2; line-height: 15px; }
`;
const Dot = styled.span`
  width: 7px;
  height: 7px;
  align-self: end;
  margin-bottom: 3px;
  border-radius: 50%;
  background: #1ee81e;
  box-shadow: 1px 1px 0 #0c3a0c;
`;
const Combo = styled.div<{ $plain?: boolean }>`
  ${sunken}
  position: relative;
  grid-row: 2;
  grid-column: 2;
  display: flex;
  height: 19px;
  margin: ${(p) => (p.$plain ? "0" : "3px 10px 0 0")};
  padding-right: 1px;
  background: #fff;
  input, select { flex: 1; min-width: 0; appearance: none; padding-left: 3px; }
`;
const Browse = styled.button`
  ${raised}
  grid-row: 2;
  grid-column: 3;
  width: 24px;
  height: 26px;
  display: flex;
  align-items: center;
  justify-content: center;
`;
const Drop = styled.ul`
  position: absolute;
  z-index: 2;
  top: 19px;
  left: -1px;
  right: -2px;
  height: 242px;
  border: 1px solid #000;
  background: #fdfdfd;
`;
const DropRow = styled.li`
  display: flex;
  align-items: center;
  height: 16px;
  padding-left: 11px;
  &::before {
    content: "";
    width: 11px;
    height: 16px;
    border-left: 1px dotted #808080;
    background: linear-gradient(90deg, #808080 50%, transparent 50%) 0 8px / 2px 1px repeat-x;
  }
  &:first-child::before { height: 8px; margin-top: 8px; background-position: 0 0; }
  &:last-child::before { height: 9px; margin-bottom: 7px; }
`;
const DropLabel = styled.button<{ $sel?: boolean }>`
  height: 16px;
  line-height: 14px;
  margin-left: 2px;
  padding: 0 1px;
  border: 1px dotted ${(p) => (p.$sel ? "#e0c060" : "transparent")};
  ${(p) => p.$sel && css`background: #0a246a; color: #fff;`}
`;
const Help = styled.article`
  flex: 1;
  padding: 4px 15px;
  h2 { font-size: 17px; line-height: 24px; font-weight: bold; }
  p { font-size: 13px; line-height: 20px; margin-top: 13px; }
`;
const Buttons = styled.footer`
  display: flex;
  gap: 5px;
  height: 44px;
  padding: 8px 0 0 479px;
`;
const Push = styled.button<{ $w: number; $gap?: boolean }>`
  ${raised}
  width: ${(p) => p.$w}px;
  height: 23px;
  margin-left: ${(p) => (p.$gap ? 16 : 0)}px;
`;
const Cursor = styled.svg`
  position: absolute;
  left: 1317px;
  top: 303px;
`;

/* ---------- map drawing ---------- */
const WEST = [
  "1110,85 1140,65 1155,38 1172,42 1176,88 1125,102", "525,243 568,232 582,275 545,290 530,285",
  "125,365 180,382 240,405 320,438 400,468 438,485 430,492 350,468 260,428 180,392", "135,365 155,355 180,358 182,384 160,375",
  "180,362 225,358 232,400 180,385", "238,352 270,358 262,395 230,385", "260,425 330,450 365,458 285,486", "270,428 300,442 310,470 282,480",
  "360,420 385,405 412,402 395,440", "405,375 425,358 430,372 425,392 400,398", "430,370 478,345 490,325 515,318 470,362 440,385",
  "480,335 500,315 520,320 500,345", "515,300 560,288 580,290 540,320", "405,430 598,270 606,282 412,445", "570,290 605,275 635,280 640,295 610,322 570,315",
  "610,318 675,280 680,287 615,325", "395,455 415,440 445,435 440,470 410,475", "415,440 440,432 435,478 418,470", "478,388 512,392 505,403",
  "500,420 530,400 542,405 520,450 495,470", "540,418 560,420 560,440 585,460 580,475 540,470", "508,472 560,480 605,495 605,504 508,500",
  "560,485 570,500 600,500", "600,450 635,445 630,470 605,475", "645,410 685,406 703,460 660,462 650,440", "662,465 700,462 697,505 670,510",
  "735,480 755,468 763,480 755,500 738,502", "772,450 800,433 808,450 778,465", "735,320 818,288 837,342 757,376", "840,345 868,335 870,385 855,375",
  "868,330 905,325 912,365 880,388", "905,320 925,320 928,345 908,352", "925,385 1035,325 1052,345 1020,345 930,392", "765,235 785,212 832,190 836,208 800,225",
];
const WEST_LINES = [
  "1155,38 1180,32 1210,22 1250,14", "1140,60 1160,36 1200,28 1245,20", "667,245 680,243 695,248 720,237 745,222 765,212 800,208 820,195 850,182 880,168 905,160 925,163 950,147",
  "760,242 800,225 835,200", "770,230 800,200 830,215", "762,236 790,228 822,218 818,190", "140,358 180,360 225,362 270,402 300,415 340,432 395,435", "232,380 262,400 290,418 350,428 380,415",
  "395,400 402,378 430,380 470,355 490,330 520,300 560,290 600,280", "350,430 400,405 460,365 510,310 570,285", "540,345 575,325 605,322", "545,342 555,356",
  "400,440 398,470 438,490", "475,385 510,397", "415,430 450,428 480,432 505,405 538,375", "500,400 495,470", "520,400 570,410", "508,470 580,474", "540,430 510,465", "595,410 605,500",
  "600,480 655,485", "645,410 650,455 670,510", "660,527 660,510 725,512 722,524", "745,505 750,530 740,545 765,560 782,578", "755,500 760,540 770,565", "722,575 765,575", "735,320 752,376",
  "840,345 862,408", "903,325 912,388", "840,345 880,325 950,300 1065,268", "868,330 950,302 1060,273", "960,330 1000,312 1070,283", "950,300 970,355", "1000,290 1002,312", "605,268 607,320",
  "500,425 540,430 535,460 500,465", "510,410 500,460 540,400", "540,440 560,440", "540,455 580,458", "740,540 770,550", "575,300 600,300 605,315", "590,275 600,320",
];
const WEST_THICK = [
  "230,390 262,400 290,418 330,430 390,436", "180,362 228,364", "230,360 234,400", "360,425 400,408", "515,302 575,288", "400,378 430,372 470,352", "510,310 485,335", "640,411 686,409",
  "660,512 722,514", "735,322 752,374", "500,430 498,468", "742,520 752,570", "845,350 860,402", "790,215 825,200",
];
const EAST = [
  "230,138 322,40 352,68 378,100 358,132 385,175 388,245 340,262 300,218 265,190",
  "335,270 395,248 442,318 410,342 350,290", "342,368 370,345 388,355 403,400 385,398 348,434 330,405 352,395", "250,357 268,360 312,455 290,445",
  "235,440 265,430 272,440 245,452", "360,490 380,478 392,512 350,525", "255,500 270,485 288,500 275,512", "275,575 312,553 325,578", "415,565 440,545 455,570",
  "445,393 487,365 525,403 485,440", "635,472 652,470 652,487 638,487", "808,15 878,15 870,30 835,53", "742,125 760,120 795,185 785,200",
  "862,108 940,73 950,95 880,128", "790,195 880,160 910,215 820,250", "890,155 965,118 980,160 920,205", "820,250 880,235 905,300 870,330",
  "880,240 910,220 925,245 900,262", "875,330 905,300 912,318 880,340", "895,265 918,262 930,280 905,290", "957,285 968,282 1030,370 1040,385 1028,390",
  "887,432 932,423 952,460 908,480", "870,508 905,500 916,542 888,548", "95,525 135,517 137,543 98,545",
];
const EAST_LINES = [
  "265,190 335,275 410,350", "270,188 350,280", "298,218 320,195 315,183 338,182", "325,250 350,225 360,250 335,265", "340,262 375,240 385,250", "375,265 400,275 395,300 370,290", "410,335 430,375", "415,345 425,340",
  "350,370 432,475", "345,375 425,475", "250,357 280,360 320,395 348,434", "258,375 300,440", "275,380 290,430", "245,538 255,500 270,485 300,520 320,540 355,535 450,495", "300,530 350,530 445,493", "295,515 345,478 350,515",
  "320,500 360,520", "335,485 370,505", "415,560 440,555 480,555", "445,570 480,553", "375,578 392,570", "487,365 585,470", "480,375 578,468", "445,393 503,470 540,465 558,445", "455,390 520,400", "428,430 430,415 448,400",
  "640,487 655,515 688,550", "533,555 558,548", "540,558 550,550", "695,70 790,195 930,415", "700,72 800,205 923,412", "750,118 815,70", "790,195 870,160 1010,155", "820,250 890,175", "800,195 870,240", "830,270 905,225 940,235",
  "895,150 950,130 945,145 900,158", "900,165 970,150", "920,205 1013,158", "925,200 940,235", "880,240 900,262 932,285", "870,330 925,285", "905,290 920,318", "865,395 895,375", "995,330 1030,372 1085,357",
  "1030,378 1085,360", "890,550 985,508", "865,505 900,578", "875,510 888,545", "105,555 118,578", "865,112 880,130 960,98", "470,425 520,405", "460,410 500,382",
];
const EAST_THICK = [
  "340,235 358,228 352,250", "335,272 390,248", "300,534 352,534", "340,490 350,520", "252,358 272,360", "820,250 890,178", "835,272 905,230", "890,155 945,128", "885,160 895,180 915,200", "880,245 912,260",
  "425,562 475,557", "870,510 885,540", "990,320 1000,340", "412,338 420,358", "268,378 298,442", "900,160 940,165 970,150",
];
const MID = ["78,582 110,560 170,545 190,597 105,640", "105,640 190,600 205,628 115,672", "115,670 178,645 185,668 130,700", "80,660 100,645 125,735 78,765 88,700", "80,838 140,838 138,850 80,850"];
const MID_LINES = ["130,700 220,655", "78,735 125,720", "105,640 130,700", "120,665 150,695", "165,612 175,640", "110,655 145,680 125,692", "150,838 175,836 178,848", "-10,575 40,540", "-10,590 45,555", "-5,600 15,598 28,618 0,618"];
const MID_THICK = ["115,675 145,680 135,698", "115,670 205,628", "100,648 118,665", "170,548 195,605"];

function Shapes({ polys, lines, thick }: { polys: string[]; lines: string[]; thick: string[] }) {
  return (
    <>
      {polys.map((p, i) => <polygon key={i} points={p} fill="#d8fccd" />)}
      {lines.map((p, i) => <polyline key={"l" + i} points={p} fill="none" />)}
      {thick.map((p, i) => <polyline key={"t" + i} points={p} fill="none" strokeWidth="6" strokeDasharray="8 2" />)}
    </>
  );
}
function MapDrawing() {
  return (
    <svg width="950" height="188" viewBox="211 95 950 188" stroke="#646464" strokeWidth="3" role="img" aria-label="map">
      <g transform="translate(200 90) scale(.3333)"><Shapes polys={WEST} lines={WEST_LINES} thick={WEST_THICK} /></g>
      <g transform="translate(540 0) scale(.3571 .3333)"><Shapes polys={MID} lines={MID_LINES} thick={MID_THICK} /></g>
      <g transform="translate(600 90) scale(.3333)"><Shapes polys={EAST} lines={EAST_LINES} thick={EAST_THICK} /></g>
    </svg>
  );
}

/* ---------- data ---------- */
const MENUS = ["视图(V)", "书签(B)", "插入(I)", "选择(S)", "地理处理(G)", "自定义(C)", "窗口(W)", "帮助(H)"];
const CATALOG = [
  "裁剪", "创建要素图层", "多部件至单部件", "复制要素", "更新", "合并", "缓冲区", "汇总统计数据", "添加字段", "转为面", "转为线", "交集取反", "空间连接", "",
  "分割线", "", "", "", "删除相同的", "选择要素", "删除字段", "添加连接", "计算字段", "", "", "修复几何", "", "要素转点", "要素转面", "要素转线", "在点处分割线", "在折点处分割线", "", "",
  "数据据清洗复制0102.x1",
];
type Node = [number, string, string, string?];
const TOOLBOX: Node[] = [
  [0, "boxroot", "ArcToolbox"],
  ...["3D Analyst 工具", "Data Interoperability 工具", "Geostatistical Analyst 工具", "Network Analyst 工具", "Schematics 工具", "Spatial Analyst 工具", "Tracking Analyst 工具", "编辑工具", "地理编码工具", "多维工具"].map((s): Node => [1, "toolbox", s, "+"]),
  [1, "toolbox", "分析工具", "-"],
  [2, "toolset", "叠加分析", "-"],
  ...["交集取反", "擦除", "更新", "标识", "相交", "空间连接", "联合"].map((s): Node => [3, "hammer", s]),
  ...["提取分析", "统计分析", "邻域分析"].map((s): Node => [2, "toolset", s, "+"]),
  ...["服务器工具", "空间统计工具", "数据管理工具", "线性参考工具", "制图工具", "转换工具", "宗地结构工具"].map((s): Node => [1, "toolbox", s, "+"]),
];

/* ---------- task bar pictures ---------- */
const Server = () => (
  <svg width="20" height="32" viewBox="0 0 20 32" aria-hidden="true">
    <path d="M0 2 5 0V20L0 22Z" fill="#7c8288" /><path d="M6 18 16 14 18 17V27L9 31 2 26V20Z" fill="#8d98a3" stroke="#56606a" /><path d="M3 21 9 24 17 19M9 24V31" stroke="#c8d0d8" fill="none" />
  </svg>
);
const PowerShell = () => (
  <svg width="28" height="24" viewBox="0 0 28 24" aria-hidden="true">
    <path d="M6 1H26Q28 1 27 4L23 21Q22 23 20 23H2Q0 23 1 20L4 3Q5 1 6 1Z" fill="#3f88c0" stroke="#9cc8e8" /><path d="M9 5 16 11 7 18M15 18H21" stroke="#fff" strokeWidth="3" fill="none" />
  </svg>
);
const Gears = () => (
  <svg width="32" height="32" viewBox="0 0 32 32" fill="none" aria-hidden="true">
    <circle cx="13" cy="13" r="10" stroke="#93acc6" strokeWidth="5" strokeDasharray="4 2.300" /><circle cx="13" cy="13" r="8" stroke="#d3e2f0" strokeWidth="5" /><circle cx="13" cy="13" r="5" stroke="#86a4c4" />
    <circle cx="25" cy="25" r="5" stroke="#8a9fb4" strokeWidth="3" strokeDasharray="2.500 1.500" /><circle cx="25" cy="25" r="3.500" stroke="#dfe8f0" strokeWidth="3" />
  </svg>
);
const PyCharm = () => (
  <svg width="32" height="30" viewBox="-1 0 32 30" aria-hidden="true">
    <path d="M0 1H22L14 15 0 28Z" fill="#35d39a" /><path d="M18 0 29 8V26L22 30 4 29 12 12Z" fill="#e6ee4c" /><path d="M20 6 29 6V20Z" fill="#2fc6c0" /><path d="M0 16 8 29H0Z" fill="#29c98a" /><rect x="4" y="5" width="21" height="21" fill="#050505" /><path d="M6 22.500H14" stroke="#fff" strokeWidth="2" />
    <text x="6" y="16" fill="#fff" fontFamily="Inter, sans-serif" fontWeight="700" fontSize="12">PC</text>
  </svg>
);
const Browser = () => (
  <svg width="32" height="32" viewBox="-1 0 32 32" fill="none" aria-hidden="true">
    <circle cx="14" cy="16" r="13" fill="#55c22d" /><circle cx="14" cy="16" r="12" stroke="#a4ec7c" strokeWidth="2" /><path d="M7 15.500H21C20 7 8 8 7 16 7 25 18 25 21 20" stroke="#fff" strokeWidth="4" /><path d="M2 30C10 32 28 14 26 1" stroke="#8ede5c" strokeWidth="2" />
  </svg>
);
const ArcGlobe = () => (
  <svg width="32" height="32" viewBox="0 0 32 32" fill="none" aria-hidden="true">
    <circle cx="15" cy="16" r="15" fill="#123f6e" /><path d="M3 9Q9 1 18 3L14 10 6 20ZM18 24 27 17 25 26 16 30Z" fill="#2d9a70" /><circle cx="15" cy="14" r="9" fill="#8fd4ee" stroke="#e4f5fc" strokeWidth="2" /><path d="M9 13Q12 7 18 9" stroke="#fff" strokeWidth="3" /><path d="M21 21 30 31" stroke="#b6713c" strokeWidth="4" />
  </svg>
);
const Cloud = () => (
  <svg width="32" height="32" viewBox="0 0 32 32" fill="none" aria-hidden="true">
    <rect width="32" height="32" rx="6" fill="#c8102e" /><path d="M21 6C18 4 15 6 16 9L19 18C20 23 12 24 12 18 12 14 17 12 20 13 26 14 27 20 24 24 20 29 11 28 8 22 6 16 9 11 12 9" stroke="#fff" strokeWidth="2.500" strokeLinecap="round" />
  </svg>
);
const Recorder = () => (
  <svg width="32" height="28" viewBox="0 0 32 28" aria-hidden="true">
    <rect width="32" height="23" fill="#111" /><path d="M2 2H12L16 11 2 14Z" fill="#c21bc0" /><path d="M12 2H24L16 12Z" fill="#f07818" /><path d="M24 2H30V10L16 12Z" fill="#e8d020" /><path d="M30 10V21H20L16 12Z" fill="#2cb84a" /><path d="M20 21H8L16 12Z" fill="#1ab0d8" /><path d="M2 14 16 11 8 21H2Z" fill="#e81850" /><path d="M4 8V4H8M24 4H28V8M4 15V19H8M24 19H28V15" stroke="#fff" fill="none" />
    <circle cx="16" cy="11.500" r="7" fill="#fff" /><text x="10.500" y="14" fontSize="6" fontWeight="700" fontFamily="Inter, sans-serif" fill="#e03030">REC</text><path d="M13 23H19V26H25V28H7V26H13Z" fill="#111" />
  </svg>
);

export default function App() {
  return (
    <Screen>
      <Global />
      <AppTitle>cMap</AppTitle>
      <Chrome>
        <Menu>
          <MenuItem><T>(E)</T></MenuItem>
          {MENUS.map((m) => <MenuItem key={m}><T>{m}</T></MenuItem>)}
        </Menu>
        <Bars $gap={6}>
          <Bar $lead>
            <Tools spec="| cut copy paste x | undo redo | add V |" />
            <BarSelect>
              <select disabled aria-label="scale" />
              <Arrow><Tri c="#808080" /></Arrow>
            </BarSelect>
            <Tools spec="| editor | toc catalog search toolwin python | model >" />
          </Bar>
          <Bar>
            <Grip />
            <EditorBtn><T>编辑器(R)</T><svg width="5" height="3" aria-hidden="true"><path d="M0 0H5L2.500 3Z" /></svg></EditorBtn>
            <Tools spec="| arrowS arrowA | line arc trace v star | reshape splitp cutp split rotate | attrs sketch | form >" />
          </Bar>
        </Bars>
        <Bars $gap={54}>
          <Bar $lead><Tools spec="| inward outward | back fwd | select V clear | pointer | info bolt popup | measure | find route xy | clock | magnify >" /></Bar>
          <Bar><Grip /><Tools spec="cube | topo v | topo2 topo2 align corner | topo | check check | inspect errs >" /></Bar>
        </Bars>
      </Chrome>

      <Work>
        <Panel $w={205}>
          <PanelHead $h={18}>
            <h2 />
            <PanelBtn aria-label="pin"><svg width="9" height="12"><path d="M2.500 1.500H6.500V6.500H2.500ZM1 7H8M4.500 7V11" stroke="#d8d6d2" fill="none" /></svg></PanelBtn>
            <PanelBtn aria-label="close"><svg width="9" height="12"><path d="M1 2 8 10M8 2 1 10" stroke="#d8d6d2" fill="none" /></svg></PanelBtn>
          </PanelHead>
          <PanelBar><Tool aria-label="list"><Icon n="list" s={14} /></Tool></PanelBar>
          <Contents>
            <Layer><T>X_Identity</T></Layer>
            <Layer><T>X</T></Layer>
          </Contents>
        </Panel>
        <MapView><MapDrawing /></MapView>
        <VScroll>
          <ScrollBtn aria-label="up"><Tri dir="up" /></ScrollBtn>
          <Space $n={45} />
          <Thumb $h={300} />
        </VScroll>

        <Panel $w={284} $gap={5}>
          <PanelHead>
            <h2>目录</h2>
            <PanelBtn aria-label="pin"><svg width="9" height="12"><path d="M2.500 1.500H6.500V6.500H2.500ZM1 7H8M4.500 7V11" stroke="#d8d6d2" fill="none" /></svg></PanelBtn>
            <PanelBtn aria-label="close"><svg width="9" height="12"><path d="M1 2 8 10M8 2 1 10" stroke="#d8d6d2" fill="none" /></svg></PanelBtn>
          </PanelHead>
          <CatBar><Tools spec="yback V gfwd up home homedb | grid v | folderplus | tree | list" /></CatBar>
          <Location>
            <label htmlFor="loc">位置:</label>
            <LocBox>
              <Icon n="hammer" />
              <input id="loc" defaultValue="更新" />
              <Arrow><Tri /></Arrow>
            </LocBox>
          </Location>
          <CatBody>
            <CatList>
              {CATALOG.map((c, i) => (
                <CatRow key={i}>
                  <Icon n="hammer" />
                  {c && <Label $sel={i === 4}><T>{c}</T></Label>}
                </CatRow>
              ))}
            </CatList>
            <VScroll>
              <ScrollBtn aria-label="up"><Tri dir="up" /></ScrollBtn>
              <Space $n={119} />
              <Thumb $h={134} />
              <Space />
              <ScrollBtn aria-label="down"><Tri /></ScrollBtn>
            </VScroll>
            <HScroll>
              <Thumb $w={226} />
              <Space />
              <ScrollBtn aria-label="right"><Tri dir="right" /></ScrollBtn>
            </HScroll>
          </CatBody>
        </Panel>

        <Panel $w={258} $gap={4}>
          <PanelHead><h2><T>ArcToolbox</T></h2></PanelHead>
          <Tree>
            {TOOLBOX.map(([lv, ic, s, ex], i) => (
              <TreeRow key={i} $lv={lv}>
                {lv > 0 && (
                  <Expander $off={!ex} aria-label="toggle">
                    <svg width="5" height="5"><path d={ex === "+" ? "M0 2H5V3H0ZM2 0H3V5H2Z" : "M0 2H5V3H0Z"} /></svg>
                  </Expander>
                )}
                <Icon n={ic} />
                <Label $sel={s === "标识"}><T>{s}</T></Label>
              </TreeRow>
            ))}
          </Tree>
        </Panel>
      </Work>

      <Dock>
        <Band $h={18} />
        <DockBar><Tools spec="tableic switchsel clear zoomsel x" /></DockBar>
        <Band $h={22} $line />
        <GridBox>
          <Table>
            <colgroup>
              <col style={{ width: 35 }} /><col style={{ width: 81 }} /><col style={{ width: 90 }} /><col />
              <col style={{ width: 88 }} /><col style={{ width: 90 }} /><col style={{ width: 162 }} /><col style={{ width: 119 }} />
            </colgroup>
            <thead>
              <tr>
                <th><T big>D *</T></th><th><T big>Shape *</T></th><th><T big>FID_DLTB</T></th><th />
                <th>图斑基地类占</th><th><T big>FID_DLTB</T></th><th>标识码</th><th><T big>AREA_PRE_C</T></th>
              </tr>
            </thead>
            <tbody>
              {[1, 2, 3, 4, 5, 6, 7].map((n) => (
                <tr key={n}>
                  <td><T>{String(n)}</T></td><td>面</td><td /><td />
                  <td><T>100</T></td><td><T>-1</T></td><td /><td />
                </tr>
              ))}
            </tbody>
          </Table>
        </GridBox>
        <DockScroll><Thumb $w={600} /></DockScroll>
        <Nav>
          <input aria-label="record" defaultValue="3" />
          <Tool $w={24} aria-label="next"><svg width="5" height="8"><path d="M0 0V8L5 4Z" /></svg></Tool>
          <Tool aria-label="last"><svg width="9" height="8"><path d="M0 0V8L5 4ZM6 0H9V8H6Z" /></svg></Tool>
          <Sep />
          <Tool $on aria-label="all"><Icon n="allrec" /></Tool>
          <Tool aria-label="selected"><Icon n="selrec" s={15} /></Tool>
          <Sep />
          <Count><T>(0 / 11 已选择)</T></Count>
        </Nav>
        <Tabs><Tab><T>DLTBGX_Identity</T></Tab></Tabs>
        <Status>
          <StatusCell $w={126} />
          <StatusCell $w={17} />
          <Coords><T>-17481.796  6428.03 未知单位</T></Coords>
        </Status>
      </Dock>

      <TaskBar>
        <FirstTask $w={19} aria-label="server"><Server /></FirstTask>
        <Quick $w={52} aria-label="powershell"><PowerShell /></Quick>
        <Quick $w={49} aria-label="settings"><Gears /></Quick>
        <Tasks>
          <Task><PyCharm /><T>pythonProject -...</T></Task>
          <Task><Browser /><T>创作中心 - 哔哩...</T></Task>
          <Task $on><ArcGlobe /><T>无标题 - ArcMap</T></Task>
          <Task><Icon n="hammer" s={32} /><T>标识</T></Task>
          <Task><Cloud /><T>把回忆拼好给你 -...</T></Task>
          <Task><Recorder /><T>Screen Recorder</T></Task>
        </Tasks>
        <Tray>
          <Tool $w={30} aria-label="input"><Icon n="sogou" /></Tool>
          <TrayBox>
            <TrayBtn aria-label="more"><svg width="7" height="10"><path d="M1 4 3.500 1.500 6 4M1 8 3.500 5.500 6 8" stroke="#000" strokeWidth="1.500" fill="none" /></svg></TrayBtn>
            {["egreen", "flag", "net", "sound"].map((n) => <TrayBtn key={n} aria-label={n}><Icon n={n} /></TrayBtn>)}
          </TrayBox>
        </Tray>
      </TaskBar>

      <Ime aria-label="ime">
        <svg width="26" height="24"><path d="M2 7.500H24V17.500H2ZM13 0V24" stroke="#2ba6dc" strokeWidth="2" fill="none" /></svg>
      </Ime>

      <Dialog role="dialog" aria-label="标识">
        <DlgTitle>
          <Icon n="hammer" />
          <h2>标识</h2>
          <WinBtn aria-label="minimize"><svg width="8" height="8"><path d="M0 6H6V8H0Z" /></svg></WinBtn>
          <WinBtn aria-label="maximize"><svg width="10" height="10"><path d="M.5 1H9.500V9.500H.5Z" stroke="#000" fill="none" /><path d="M0 0H10V2H0Z" /></svg></WinBtn>
          <WinBtn $gap aria-label="close"><svg width="8" height="8"><path d="M.5.5 7.500 7.500M7.500.5.5 7.500" stroke="#000" strokeWidth="1.500" /></svg></WinBtn>
        </DlgTitle>
        <DlgBody>
          <Pane>
            <Form>
              <Param>
                <Dot /><label htmlFor="p1">输入要素</label>
                <Combo>
                  <input id="p1" /><Arrow><Tri /></Arrow>
                  <Drop>
                    {["DLTBGX_Identity", "DLTB", "DLTBGX"].map((s, i) => (
                      <DropRow key={s}><Icon n="diamond" /><DropLabel type="button" $sel={i === 0}><T>{s}</T></DropLabel></DropRow>
                    ))}
                  </Drop>
                </Combo>
                <Browse type="button" aria-label="browse"><Icon n="folder" /></Browse>
              </Param>
              <Param>
                <Dot />
                <Combo><input aria-label="标识要素" /><Arrow><Tri /></Arrow></Combo>
                <Browse type="button" aria-label="browse"><Icon n="folder" /></Browse>
              </Param>
              <Param>
                <Dot />
                <Combo><input aria-label="输出要素类" /></Combo>
                <Browse type="button" aria-label="browse"><Icon n="folder" /></Browse>
              </Param>
              <Param $plain>
                <Combo $plain><select aria-label="连接属性" /><Arrow><Tri /></Arrow></Combo>
              </Param>
              <Param $plain>
                <Combo $plain><select aria-label="容差" /><Arrow><Tri /></Arrow></Combo>
              </Param>
            </Form>
            <VScroll>
              <ScrollBtn aria-label="up"><Tri dir="up" c="#808080" /></ScrollBtn>
              <Space />
              <ScrollBtn aria-label="down"><Tri c="#808080" /></ScrollBtn>
            </VScroll>
          </Pane>
          <Pane $w={341} $bg="#fdfdfd">
            <Help>
              <h2>输入要素</h2>
              <p>输入要素类或图层。</p>
            </Help>
            <VScroll>
              <ScrollBtn aria-label="up"><Tri dir="up" c="#808080" /></ScrollBtn>
              <Space />
              <ScrollBtn aria-label="down"><Tri c="#808080" /></ScrollBtn>
            </VScroll>
          </Pane>
        </DlgBody>
        <Buttons>
          <Push $w={75}>确定</Push>
          <Push $w={75}>取消</Push>
          <Push $w={90}>环境...</Push>
          <Push $w={98}>&lt;&lt; 隐藏帮助</Push>
          <Push $w={102} $gap>工具帮助</Push>
        </Buttons>
      </Dialog>
      <Cursor width="14" height="22" viewBox="0 0 14 22" aria-hidden="true">
        <path d="M1 1V17L5 13.500 8 20.500 11 19 8 12.500H13Z" fill="#fff" stroke="#000" />
      </Cursor>
    </Screen>
  );
}
